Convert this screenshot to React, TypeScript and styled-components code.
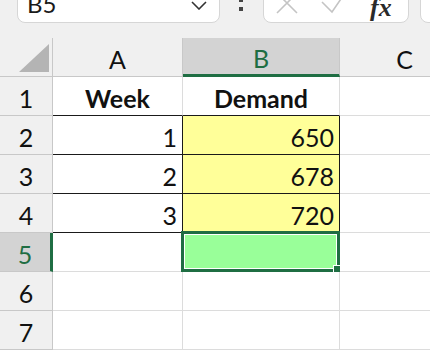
import styled, { createGlobalStyle, css } from 'styled-components';

const GlobalStyle = createGlobalStyle`
    html, body {
        margin: 0;
        padding: 0;
        background: #ffffff;
        overflow: hidden;
    }
    body {
        font-family: Lato, "Liberation Sans", sans-serif;
    }
`;

const green = '#1f6e43';
const gridLine = '#dcdcdc';

const Toolbar = styled.div`
    height: 38px;
    background: #f0f0f0;
    display: flex;
    align-items: flex-start;
    overflow: hidden;

    & > * {
        flex-shrink: 0;
    }
`;

const NameBox = styled.div`
    margin: -17px 0 0 17px;
    width: 203px;
    height: 40px;
    box-sizing: border-box;
    border: 1px solid #d6d6d6;
    border-radius: 8px;
    background: #fff;
    display: flex;
    align-items: flex-start;
    justify-content: space-between;
    padding: 8px 12px 0 9px;
    font-size: 24px;
    line-height: 24px;
    color: #1a1a1a;
`;

const Chevron = styled.svg`
    margin-top: 9px;
`;

const Colon = styled.div`
    margin: -2px 0 0 19px;
    width: 4px;
    display: flex;
    flex-direction: column;
    gap: 5px;

    span {
        width: 4px;
        height: 4px;
        background: #444;
    }
`;

const FormulaBox = styled.div`
    margin: -17px 0 0 20px;
    width: 146px;
    height: 40px;
    box-sizing: border-box;
    border: 1px solid #d6d6d6;
    border-radius: 8px;
    background: #fff;
    display: flex;
    align-items: flex-start;
    padding: 8px 0 0 12px;
    gap: 22px;
`;

const Fx = styled.span`
    margin: 3px 0 0 2px;
    font-family: "Liberation Serif", serif;
    font-style: italic;
    font-weight: bold;
    font-size: 26px;
    line-height: 26px;
    color: #2a2a2a;
`;

const ExtraBox = styled(FormulaBox)`
    margin-left: 11px;
    width: 60px;
`;

const Sheet = styled.div`
    display: grid;
    grid-template-columns: 53px 130px 157px 130px;
    grid-auto-rows: 39px;
    font-size: 25px;
    color: #111;
`;

type CellProps = {
    $align?: 'left' | 'center' | 'right';
    $bold?: boolean;
    $fill?: string;
    $right?: string;
    $bottom?: string;
};

const Cell = styled.div<CellProps>`
    position: relative;
    box-sizing: border-box;
    display: flex;
    align-items: center;
    padding: 3px 5px 0;
    justify-content: ${p => (p.$align === 'right' ? 'flex-end' : p.$align === 'center' ? 'center' : 'flex-start')};
    font-weight: ${p => (p.$bold ? 700 : 400)};
    background: ${p => p.$fill || '#fff'};
    border-right: 1px solid ${p => p.$right || gridLine};
    border-bottom: 1px solid ${p => p.$bottom || gridLine};
`;

const Header = styled.div<{ $active?: boolean; $col?: boolean }>`
    box-sizing: border-box;
    display: flex;
    align-items: center;
    justify-content: center;
    padding-top: 3px;
    background: ${p => (p.$active ? '#d3d3d3' : '#f0f0f0')};
    color: ${p => (p.$active ? green : '#111')};
    border-right: 1px solid #c8c8c8;
    border-bottom: 1px solid #c8c8c8;
    ${p =>
        p.$active && p.$col &&
        css`
            border-bottom: 3px solid ${green};
        `}
    ${p =>
        p.$active && !p.$col &&
        css`
            border-right: 3px solid ${green};
        `}
`;

const Corner = styled.div`
    box-sizing: border-box;
    background: #f0f0f0;
    border-right: 1px solid #c8c8c8;
    border-bottom: 1px solid #c8c8c8;
    display: flex;
    align-items: flex-end;
    justify-content: flex-end;
    padding: 0 3px 4px 0;
`;

const Selection = styled.div`
    position: absolute;
    inset: -2px -1px -1px -2px;
    border: 3px solid ${green};
    box-shadow: inset 0 0 0 1px #fff;
    pointer-events: none;
`;

const Handle = styled.div`
    position: absolute;
    right: -5px;
    bottom: -5px;
    width: 7px;
    height: 7px;
    background: ${green};
    border: 1px solid #fff;
`;

const black = '#1a1a1a';
const yellow = '#ffff99';

const rows = [
    { n: 1, a: 'Week', b: 'Demand', head: true },
    { n: 2, a: '1', b: '650' },
    { n: 3, a: '2', b: '678' },
    { n: 4, a: '3', b: '720' },
    { n: 5, a: '', b: '', selected: true },
    { n: 6, a: '', b: '' },
    { n: 7, a: '', b: '' },
];

export default function App() {
    return (
        <>
            <GlobalStyle />
            <Toolbar>
                <NameBox>
                    <span>B5</span>
                    <Chevron width="16" height="9" viewBox="0 0 16 9">
                        <polyline points="1,1 8,8 15,1" fill="none" stroke="#333" strokeWidth="1.6" />
                    </Chevron>
                </NameBox>
                <Colon>
                    <span />
                    <span />
                </Colon>
                <FormulaBox>
                    <svg width="22" height="22" viewBox="0 0 22 22">
                        <path d="M1 1 L21 21 M21 1 L1 21" stroke="#c4c4c4" strokeWidth="1.6" fill="none" />
                    </svg>
                    <svg width="26" height="22" viewBox="0 0 26 22">
                        <path d="M2 10 L12 20 L25 1" stroke="#c4c4c4" strokeWidth="1.6" fill="none" />
                    </svg>
                    <Fx>fx</Fx>
                </FormulaBox>
                <ExtraBox />
            </Toolbar>
            <Sheet>
                <Corner>
                    <svg width="30" height="28" viewBox="0 0 30 28">
                        <polygon points="0,28 30,28 30,0" fill="#b4b4b4" />
                    </svg>
                </Corner>
                <Header $col>A</Header>
                <Header $col $active>B</Header>
                <Header $col>C</Header>
                {rows.map(r => {
                    const boxed = !r.head && r.n <= 4;
                    const edge = r.head || boxed ? black : undefined;
                    return [
                        <Header key={`h${r.n}`} $active={r.selected}>{r.n}</Header>,
                        <Cell
                            key={`a${r.n}`}
                            $align={r.head ? 'center' : 'right'}
                            $bold={r.head}
                            $right={boxed ? black : undefined}
                            $bottom={edge}
                        >
                            {r.a}
                        </Cell>,
                        <Cell
                            key={`b${r.n}`}
                            $align={r.head ? 'center' : 'right'}
                            $bold={r.head}
                            $fill={boxed ? yellow : r.selected ? '#99ff99' : undefined}
                            $right={boxed ? black : undefined}
                            $bottom={edge}
                        >
                            {r.b}
                            {r.selected && (
                                <Selection>
                                    <Handle />
                                </Selection>
                            )}
                        </Cell>,
                        <Cell key={`c${r.n}`} />,
                    ];
                })}
            </Sheet>
        </>
    );
}
